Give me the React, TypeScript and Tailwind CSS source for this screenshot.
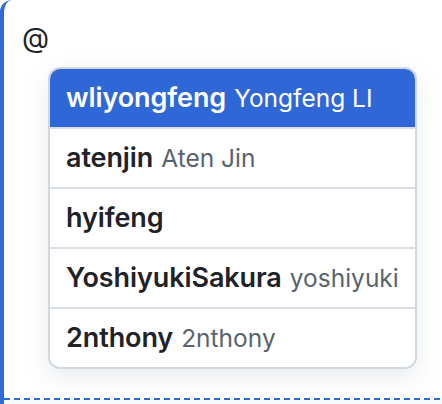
import React from "react";

const users = [
  { login: "wliyongfeng", name: "Yongfeng LI", active: true },
  { login: "atenjin", name: "Aten Jin" },
  { login: "hyifeng", name: "" },
  { login: "YoshiyukiSakura", name: "yoshiyuki" },
  { login: "2nthony", name: "2nthony" },
];

export default function App() {
  return (
    <div className="w-[442px] h-[404px] overflow-hidden bg-white font-['Inter',_'Liberation_Sans',_sans-serif]">
      <div className="w-[480px] h-[440px] border-l-4 border-[#2f6bd6] rounded-tl-[12px] flex flex-col">
        <div className="h-[400px] border-b-2 border-dashed border-[#2f6bd6] pl-[18px] pt-[22px]">
          <div className="text-[28px] leading-[32px] text-[#1f2328]">@</div>
          <div className="mt-[13px] ml-[26px] w-[369px] rounded-[12px] border-2 border-[#d0d7de] bg-white overflow-hidden shadow-[0_8px_24px_rgba(140,149,159,0.2)]">
            {users.map((u, i) => (
              <div
                key={u.login}
                className={
                  (i > 0 ? "h-[60px] border-t-2 border-[#d8dee4] " : "h-[58px] ") +
                  (u.active ? "bg-[#2f68d6] " : "bg-white ") +
                  "flex items-center pl-[16px] whitespace-nowrap"
                }
              >
                <span
                  className={
                    "text-[27px] font-semibold tracking-[-0.1px] " +
                    (u.active ? "text-white" : "text-[#1f2328]")
                  }
                >
                  {u.login}
                </span>
                {u.name ? (
                  <span
                    className={
                      "ml-[8px] text-[24.5px] " +
                      (u.active ? "text-white" : "text-[#59636e]")
                    }
                  >
                    {u.name}
                  </span>
                ) : null}
              </div>
            ))}
          </div>
        </div>
        <div className="flex-1 bg-[#f6f8fa]" />
      </div>
    </div>
  );
}
